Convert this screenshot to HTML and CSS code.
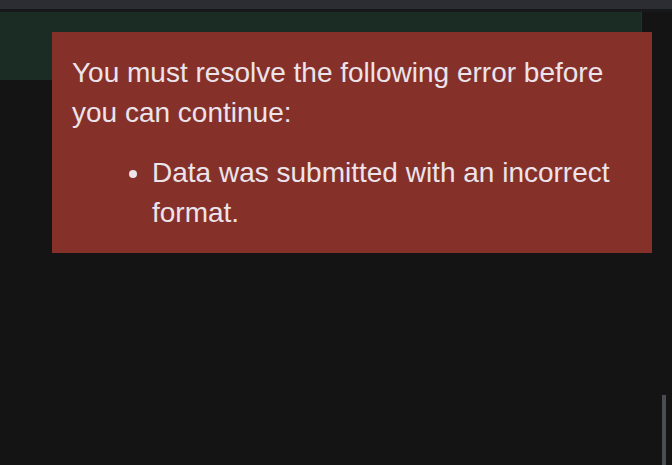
FILE: index.html
```html
<!DOCTYPE html>
<html lang="en">
<head>
  <meta charset="UTF-8">
  <meta name="viewport" content="width=device-width, initial-scale=1">
  <title>Error</title>
  <link rel="stylesheet" href="styles.css">
</head>
<body>
  <div class="top-bar"></div>
  <div class="page">
    <div class="main">
      <div class="header-panel"></div>
    </div>
    <div class="side"></div>
    <div class="scroll-thumb"></div>
  </div>

  <div class="error-box">
    <p>You must resolve the following error before you can continue:</p>
    <ul>
      <li>Data was submitted with an incorrect format.</li>
    </ul>
  </div>
</body>
</html>
```

FILE: styles.css
```css
html, body {
  height: 100%;
}
body {
  font-family: "Liberation Sans", Arial, sans-serif;
  margin: 0;
  padding: 0;
  background: #141414;
  overflow: hidden;
  display: flex;
  flex-direction: column;
}
.top-bar {
  height: 9px;
  background: #2c2d32;
  border-bottom: 3px solid #17181a;
}
.page {
  position: relative;
  flex: 1;
  display: flex;
}
.main {
  width: 642px;
}
.header-panel {
  height: 68px;
  background: #1a2c24;
  border-right: 1px solid #22302a;
}
.side {
  flex: 1;
}
.scroll-thumb {
  position: absolute;
  right: 6px;
  bottom: 0;
  width: 4px;
  height: 70px;
  background: #4a4d52;
}
.error-box {
  position: absolute;
  top: 32px;
  left: 52px;
  width: 560px;
  padding: 21px 20px 20px;
  background: #85312a;
  color: #ece4ea;
  font-size: 28px;
  line-height: 40px;
}
.error-box p {
  margin: 0 0 20px;
}
.error-box ul {
  margin: 0;
  padding-left: 80px;
}
```
